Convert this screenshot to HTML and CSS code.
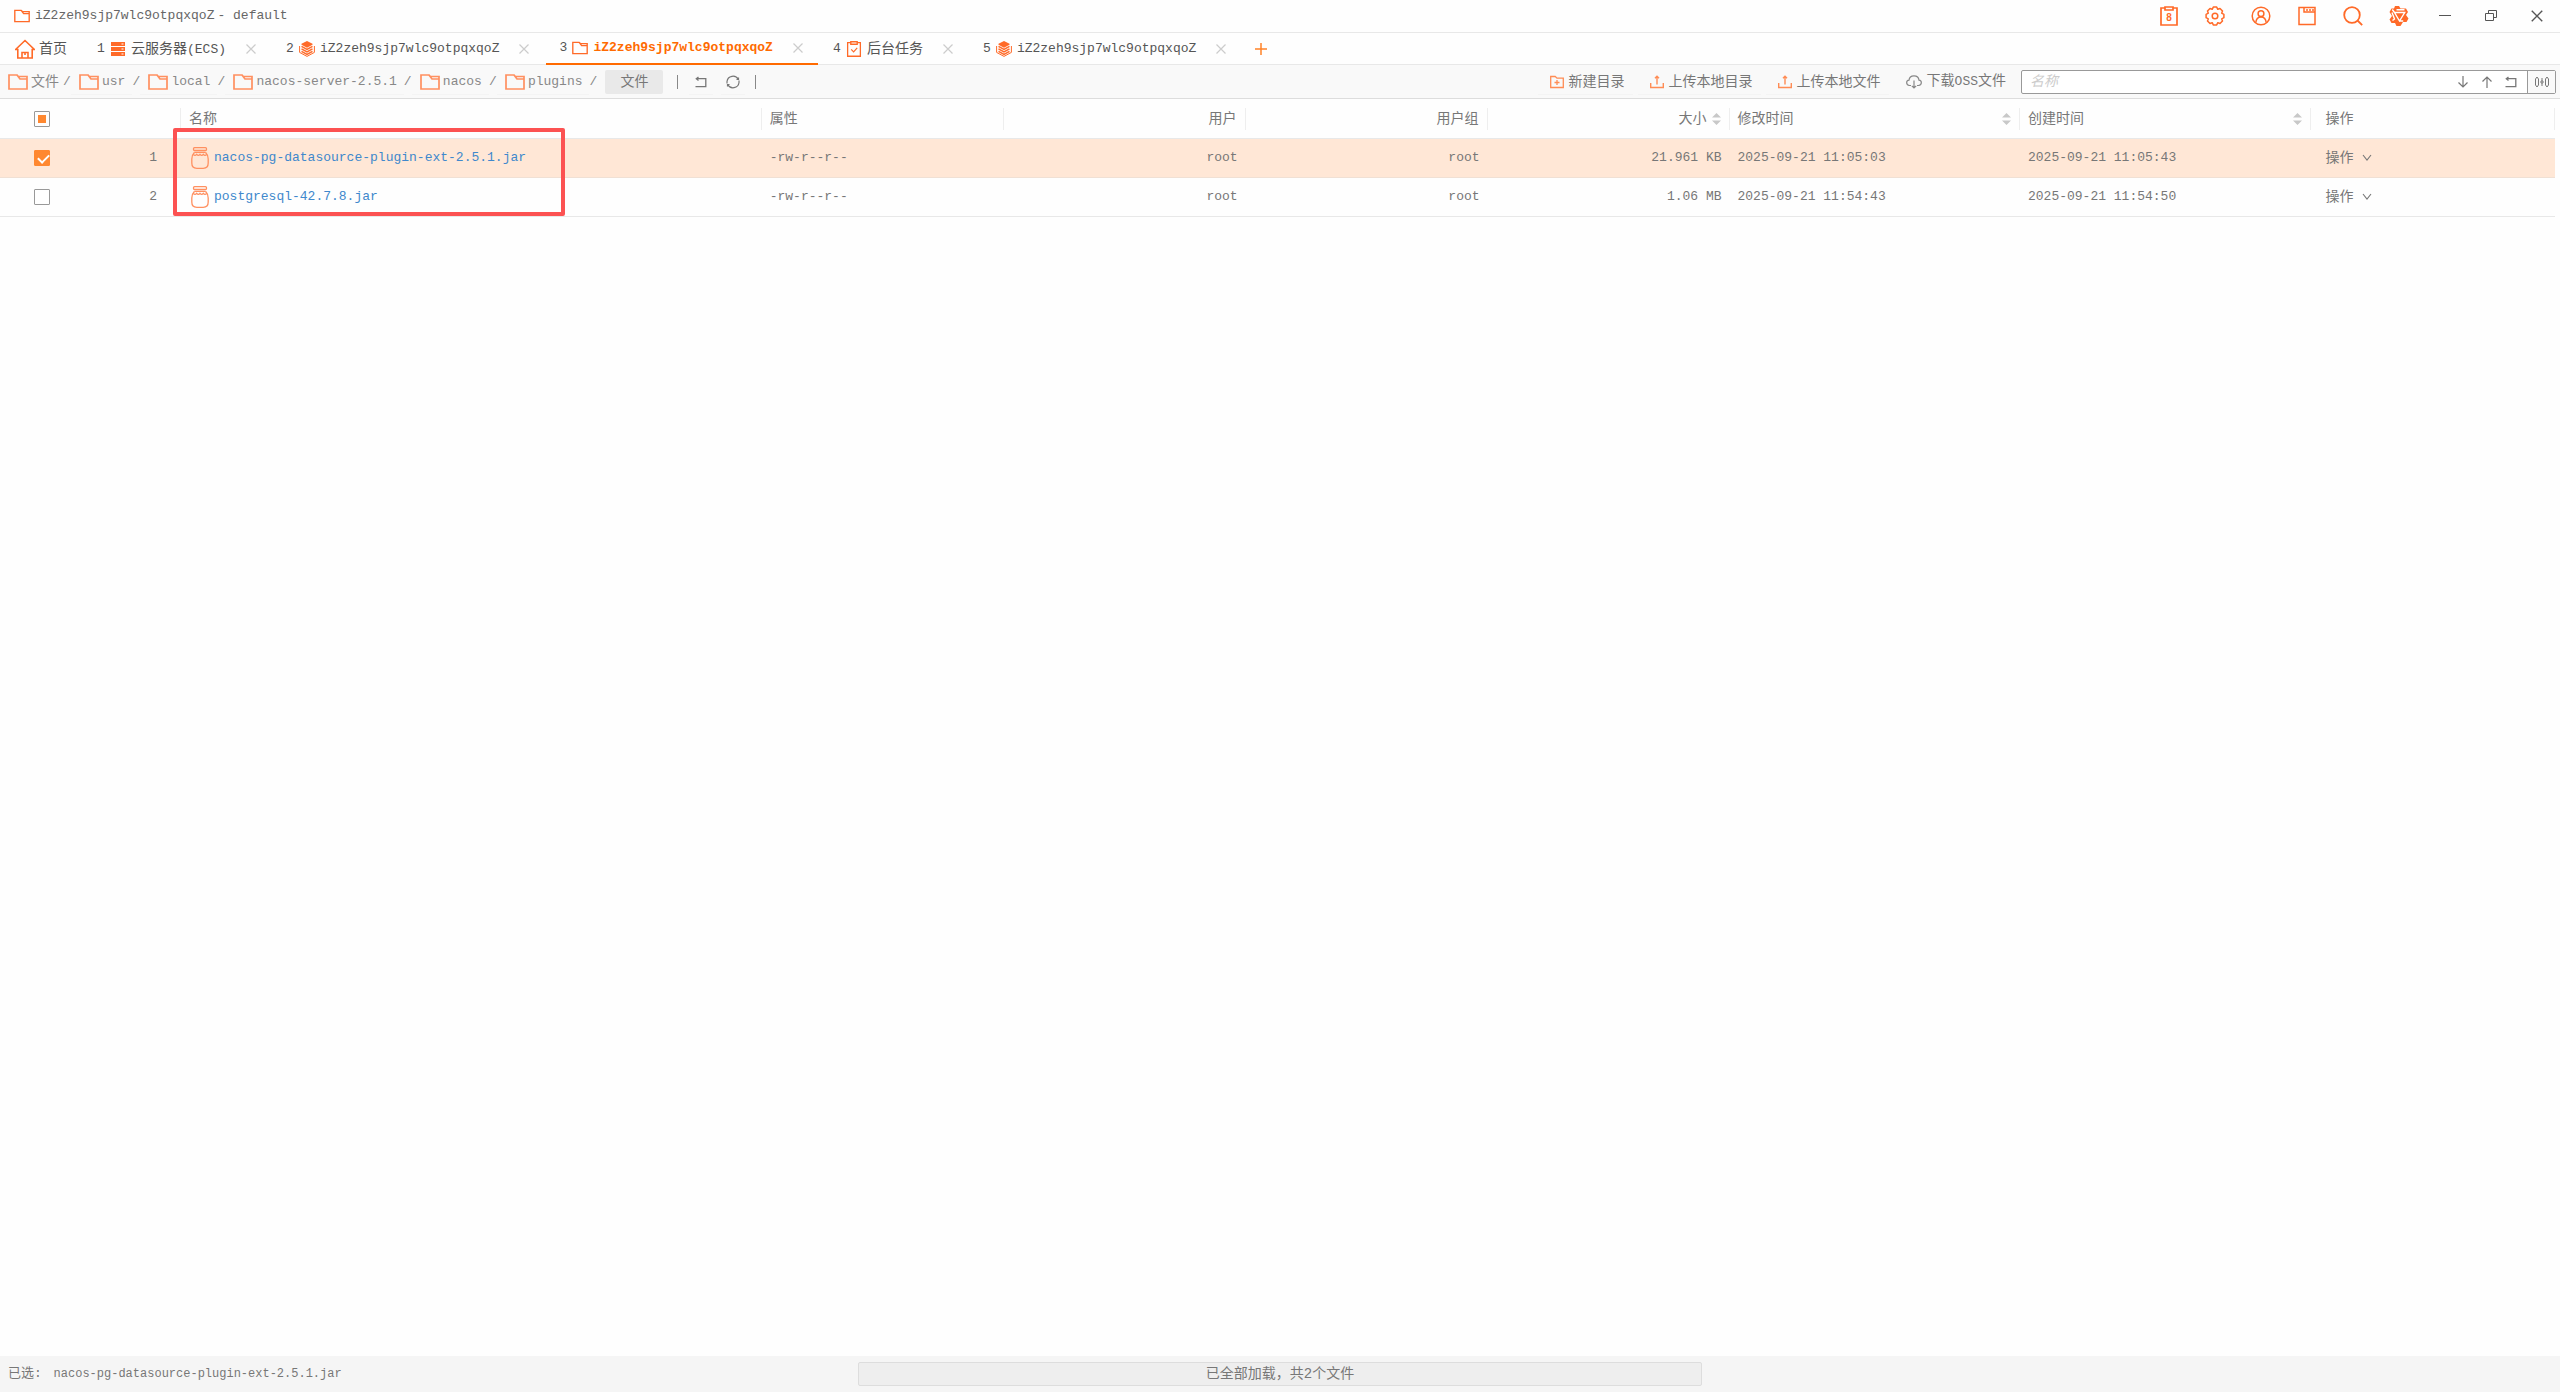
FILE: index.html
```
<!DOCTYPE html>
<html lang="zh-CN">
<head>
<meta charset="UTF-8">
<meta name="viewport" content="width=device-width, initial-scale=1.0">
<title>iZ2zeh9sjp7wlc9otpqxqoZ - default</title>
<link rel="stylesheet" href="styles.css">
</head>
<body>
<svg class="defs" width="0" height="0" aria-hidden="true">
    <symbol id="folder" viewBox="0 0 20 16">
        <path d="M1 1h8l1.500 1.500H19V15H1zM9 1l3 4h7" fill="none" stroke="currentColor" stroke-width="1.700"/>
    </symbol>
    <symbol id="stack" viewBox="0 0 16 16">
        <path d="M8 0l5.500 2.800v1L8 6.800 2.500 3.800v-1z" fill="currentColor"/>
        <path d="M2.500 5.300L8 8.300l5.500-3M2.500 7.800l5.500 3 5.500-3M2.500 10.300l5.500 3 5.500-3" fill="none" stroke="currentColor" stroke-width="1.500"/>
        <path d="M.6 5v6.400L8 15.400l7.400-4V5" fill="none" stroke="currentColor"/>
    </symbol>
    <symbol id="board" viewBox="0 0 18 20">
        <path d="M5 2H1v17h16V2h-4M5 1h8v3H5z" fill="none" stroke="currentColor" stroke-width="1.700"/>
    </symbol>
    <symbol id="jar" viewBox="0 0 18 22">
        <g fill="none" stroke="currentColor" stroke-width="1.300">
            <rect x="2.500" y=".7" width="13" height="2.800" rx="1"/>
            <path d="M3.500 5.300h11M2.300 7.300q1.700 2 3.400 0 1.700 2 3.300 0 1.700 2 3.300 0 1.700 2 3.400 0"/>
            <path d="M3.500 5.300C1.500 7.500.8 10 .8 12v4c0 3.500 2 5.300 5 5.300h6.400c3 0 5-1.800 5-5.300v-4c0-2-.7-4.500-2.700-6.700"/>
        </g>
    </symbol>
    <symbol id="back" viewBox="0 0 12 12">
        <path d="M3.500 1L1.300 2.700l2.200 1.800M1.300 2.700h9.500v8H.500" fill="none" stroke="currentColor" stroke-width="1.300"/>
    </symbol>
    <symbol id="close" viewBox="0 0 12 12">
        <path d="M1.500 1.500l9 9m0-9l-9 9" fill="none" stroke="currentColor" stroke-width="1.200"/>
    </symbol>
    <symbol id="upload" viewBox="0 0 14 14">
        <path d="M.7 8v4.500h12.600V8M7 9.500V1.500M5 3.300L7 1.300l2 2" fill="none" stroke="currentColor" stroke-width="1.400"/>
    </symbol>
    <symbol id="sort" viewBox="0 0 9 14">
        <path d="M4.500 1L9 5.500H0zM4.500 13L9 8.500H0z" fill="currentColor"/>
    </symbol>
    <symbol id="chevron" viewBox="0 0 10 8">
        <path d="M1 1l4 5 4-5" fill="none" stroke="currentColor" stroke-width="1.100"/>
    </symbol>
</svg>

<header class="titlebar">
    <svg class="title-icon"><use href="#folder"/></svg>
    <h1><span>iZ2zeh9sjp7wlc9otpqxqoZ</span> <span>- default</span></h1>
    <div class="window-tools">
        <button class="tool" aria-label="任务">
            <svg width="18" height="20" viewBox="0 0 18 20"><use href="#board"/><text x="9" y="15" class="badge-num">8</text></svg>
        </button>
        <button class="tool" aria-label="设置">
            <svg width="20" height="20" viewBox="0 0 20 20" fill="none" stroke="currentColor" stroke-width="1.500"><path d="M18.900 8.300v3.400l-2.200 1.100.8 2.200-2.500 2.500-2.200-.8-1.100 2.200H8.300l-1.100-2.200-2.200.8L2.500 15l.8-2.200-2.200-1.100V8.300l2.200-1.100L2.500 5 5 2.500l2.200.8 1.100-2.200h3.400l1.100 2.200 2.200-.8L17.500 5l-.8 2.200z" stroke-linejoin="round"/><circle cx="10" cy="10" r="2.800"/></svg>
        </button>
        <button class="tool" aria-label="用户">
            <svg width="20" height="20" viewBox="0 0 20 20" fill="none" stroke="currentColor" stroke-width="1.500"><circle cx="10" cy="10" r="8.800"/><circle cx="10" cy="7.700" r="2.900"/><path d="M4.800 16.500c.4-3.500 2.200-5.500 5.200-5.500s4.800 2 5.200 5.500"/></svg>
        </button>
        <button class="tool" aria-label="窗口">
            <svg width="18" height="20" viewBox="0 0 18 20" fill="none" stroke="currentColor" stroke-width="1.500"><path d="M1 1.500h16v17H1zM6 1.500V6h11M9 3v2M12 3v2M15 3v2"/></svg>
        </button>
        <button class="tool" aria-label="搜索">
            <svg width="20" height="20" viewBox="0 0 20 20" fill="none" stroke="currentColor" stroke-width="1.800"><circle cx="9" cy="9" r="7.800"/><path d="M14.500 14.500l4.700 4.700"/></svg>
        </button>
        <button class="tool" aria-label="助手">
            <svg width="20" height="20" viewBox="0 0 20 20"><path d="M6 0h4l1.500 2.500H17l2 3.500-2 3 2.500 3.500-2 3.500H14l-2.500 4h-4L6 17H2.500L.5 13.500 3 10 .5 6l2-3.500H5z" fill="currentColor"/><path d="M5.500 6.500h10.200L10.500 15zM5.500 6.500L3.300 3.500M3 6.500l2.500 6.500-2 1.500M10.500 15h3.700M7.500 3.800h8" fill="none" stroke="#fff" stroke-width="1.400"/></svg>
        </button>
        <button class="tool dark" aria-label="最小化">
            <svg width="12" height="12" viewBox="0 0 12 12"><path d="M0 5.500h12" stroke="currentColor"/></svg>
        </button>
        <button class="tool dark" aria-label="还原">
            <svg width="12" height="12" viewBox="0 0 12 12" fill="none" stroke="currentColor"><path d="M.5 3.500h8v7h-8zM3.500 3.500v-3h8v7h-3"/></svg>
        </button>
        <button class="tool dark" aria-label="关闭">
            <svg class="close-window"><use href="#close"/></svg>
        </button>
    </div>
</header>

<nav class="tabs">
    <a href="#" class="home">
        <svg width="20" height="20" viewBox="0 0 20 20" fill="none" stroke="currentColor" stroke-width="1.600"><path d="M.6 10.500L10 1.500l9.400 9h-2.200V19H2.800v-8.500zM7 19v-5.500h6V19M10 13.500V16"/></svg>
        首页
    </a>
    <div class="tab">
        <span class="num">1</span>
        <svg class="tab-icon" viewBox="0 0 16 16"><path d="M1 1h14v4H1zM1 6h14v4H1zM1 11h14v4H1z" fill="currentColor"/><path d="M11.500 3h2M11.500 8h2M11.500 13h2" stroke="#fff"/></svg>
        <a href="#">云服务器<span class="mono">(ECS)</span></a>
        <button class="tab-close" aria-label="关闭标签"><svg><use href="#close"/></svg></button>
    </div>
    <div class="tab">
        <span class="num">2</span>
        <svg class="tab-icon"><use href="#stack"/></svg>
        <a href="#" class="mono">iZ2zeh9sjp7wlc9otpqxqoZ</a>
        <button class="tab-close" aria-label="关闭标签"><svg><use href="#close"/></svg></button>
    </div>
    <div class="tab active">
        <span class="num">3</span>
        <svg class="tab-icon"><use href="#folder"/></svg>
        <a href="#" class="mono">iZ2zeh9sjp7wlc9otpqxqoZ</a>
        <button class="tab-close" aria-label="关闭标签"><svg><use href="#close"/></svg></button>
    </div>
    <div class="tab">
        <span class="num">4</span>
        <svg class="tab-icon" viewBox="0 0 18 20"><use href="#board"/><path d="M5.500 10.500l3 3 4.500-5" fill="none" stroke="currentColor" stroke-width="1.500"/></svg>
        <a href="#">后台任务</a>
        <button class="tab-close" aria-label="关闭标签"><svg><use href="#close"/></svg></button>
    </div>
    <div class="tab">
        <span class="num">5</span>
        <svg class="tab-icon"><use href="#stack"/></svg>
        <a href="#" class="mono">iZ2zeh9sjp7wlc9otpqxqoZ</a>
        <button class="tab-close" aria-label="关闭标签"><svg><use href="#close"/></svg></button>
    </div>
    <button class="tab-add" aria-label="新建标签"><svg width="12" height="12" viewBox="0 0 12 12"><path d="M0 6h12M6 0v12" stroke="currentColor" stroke-width="1.500"/></svg></button>
</nav>

<div class="toolbar">
    <div class="path">
        <a href="#" class="root"><svg><use href="#folder"/></svg>文件</a><i>/</i>
        <a href="#"><svg><use href="#folder"/></svg><span class="mono">usr</span></a><i>/</i>
        <a href="#"><svg><use href="#folder"/></svg><span class="mono">local</span></a><i>/</i>
        <a href="#"><svg><use href="#folder"/></svg><span class="mono">nacos-server-2.5.1</span></a><i>/</i>
        <a href="#"><svg><use href="#folder"/></svg><span class="mono">nacos</span></a><i>/</i>
        <a href="#"><svg><use href="#folder"/></svg><span class="mono">plugins</span></a><i>/</i>
    </div>
    <button class="type">文件</button>
    <span class="bar"></span>
    <button class="small" aria-label="返回"><svg width="12" height="12"><use href="#back"/></svg></button>
    <button class="small" aria-label="刷新"><svg width="14" height="14" viewBox="0 0 14 14" fill="none" stroke="currentColor" stroke-width="1.200"><path d="M1 8.500V6.500A6 6 0 0 1 12.300 4.500M13 5.500v2A6 6 0 0 1 1.700 9.500M12.500 2.500v2h-2M1.500 11.500v-2h2"/></svg></button>
    <span class="bar"></span>
    <div class="actions">
        <button><svg width="14" height="14" viewBox="0 0 14 14" fill="none" stroke="currentColor" stroke-width="1.300"><path d="M.7 1.500h4.500L7 3.200h6.300v9.300H.7zM4.500 7.500h5M7 5v5"/></svg>新建目录</button>
        <button><svg width="14" height="14"><use href="#upload"/></svg>上传本地目录</button>
        <button><svg width="14" height="14"><use href="#upload"/></svg>上传本地文件</button>
        <button class="download"><svg width="16" height="14" viewBox="0 0 16 14" fill="none" stroke="currentColor" stroke-width="1.200"><path d="M5 10.500H3.500C-.3 10-.1 5.500 3 5.200 3.500-.6 12.500-.6 13 5.200c3.100.3 3.300 4.800-.5 5.300H11M8 5.500V13M5.800 10.800L8 13l2.200-2.200"/></svg><span>下载<span class="mono">OSS</span>文件</span></button>
    </div>
    <div class="search">
        <input type="text" placeholder="名称" aria-label="名称">
        <button aria-label="下一个"><svg width="12" height="12" viewBox="0 0 12 12"><path d="M6 0v11M1.500 6.500L6 11l4.500-4.500" fill="none" stroke="currentColor" stroke-width="1.200"/></svg></button>
        <button aria-label="上一个"><svg width="12" height="12" viewBox="0 0 12 12"><path d="M6 12V1M1.500 5.500L6 1l4.500 4.500" fill="none" stroke="currentColor" stroke-width="1.200"/></svg></button>
        <button aria-label="返回"><svg width="12" height="12"><use href="#back"/></svg></button>
        <button class="filter" aria-label="筛选"><svg width="14" height="12" viewBox="0 0 14 12" fill="none" stroke="currentColor"><path d="M.5 3L2 1l1.500 2v6L2 11 .5 9zM10.500 3L12 1l1.500 2v6L12 11l-1.500-2zM7 2v8M5.500 6L7 4.500 8.500 6 7 7.500z"/></svg></button>
    </div>
</div>

<main>
    <table>
        <colgroup>
            <col class="c-check"><col class="c-index"><col>
            <col class="c-fixed"><col class="c-fixed"><col class="c-fixed"><col class="c-fixed">
            <col class="c-time"><col class="c-time"><col class="c-op">
        </colgroup>
        <thead>
            <tr>
                <th class="check"><input type="checkbox" class="some" aria-label="全选"></th>
                <th><div></div></th>
                <th><div>名称</div></th>
                <th><div>属性</div></th>
                <th class="right"><div>用户</div></th>
                <th class="right"><div>用户组</div></th>
                <th class="right"><div>大小<svg class="sort"><use href="#sort"/></svg></div></th>
                <th class="spread"><div>修改时间<svg class="sort"><use href="#sort"/></svg></div></th>
                <th class="spread"><div>创建时间<svg class="sort"><use href="#sort"/></svg></div></th>
                <th class="op"><div>操作</div></th>
            </tr>
        </thead>
        <tbody>
            <tr class="selected">
                <td class="check"><input type="checkbox" checked aria-label="选择 nacos-pg-datasource-plugin-ext-2.5.1.jar"></td>
                <td class="index">1</td>
                <td class="name"><a href="#"><svg><use href="#jar"/></svg>nacos-pg-datasource-plugin-ext-2.5.1.jar</a></td>
                <td>-rw-r--r--</td>
                <td class="right">root</td>
                <td class="right">root</td>
                <td class="right">21.961 KB</td>
                <td>2025-09-21 11:05:03</td>
                <td>2025-09-21 11:05:43</td>
                <td class="op"><button>操作<svg><use href="#chevron"/></svg></button></td>
            </tr>
            <tr>
                <td class="check"><input type="checkbox" aria-label="选择 postgresql-42.7.8.jar"></td>
                <td class="index">2</td>
                <td class="name"><a href="#"><svg><use href="#jar"/></svg>postgresql-42.7.8.jar</a></td>
                <td>-rw-r--r--</td>
                <td class="right">root</td>
                <td class="right">root</td>
                <td class="right">1.06 MB</td>
                <td>2025-09-21 11:54:43</td>
                <td>2025-09-21 11:54:50</td>
                <td class="op"><button>操作<svg><use href="#chevron"/></svg></button></td>
            </tr>
        </tbody>
    </table>
    <div class="mark"></div>
</main>

<footer>
    <p>已选: <span>nacos-pg-datasource-plugin-ext-2.5.1.jar</span></p>
    <button class="loaded">已全部加载，共2个文件</button>
</footer>
</body>
</html>
```

FILE: styles.css
```
* {
    box-sizing: border-box;
}
body {
    margin: 0;
    min-height: 100vh;
    display: flex;
    flex-direction: column;
    background: #fefefe;
    color: #777;
    font: 14px/20px "Liberation Mono", "Noto Sans CJK SC", monospace;
}
button, input {
    margin: 0;
    padding: 0;
    border: 0;
    background: none;
    color: inherit;
    font: inherit;
}
a {
    color: inherit;
    text-decoration: none;
}
svg {
    flex: none;
}
.defs {
    position: absolute;
}
.mono {
    font-size: 13px;
}

/* 标题栏 */
.titlebar {
    display: flex;
    align-items: center;
    height: 33px;
    padding-left: 14px;
    border-bottom: 1px solid #e8e8e8;
}
.title-icon {
    width: 16px;
    height: 14px;
    color: #ff6a28;
}
h1 {
    display: flex;
    gap: 3px;
    margin: 0 0 0 5px;
    color: #666;
    font-size: 13px;
    font-weight: normal;
}
.window-tools {
    display: flex;
    margin-left: auto;
}
.tool {
    display: flex;
    justify-content: center;
    align-items: center;
    width: 46px;
    height: 32px;
    color: #ff6a28;
}
.tool.dark {
    color: #555;
}
.close-window {
    width: 14px;
    height: 14px;
}
.badge-num {
    fill: currentColor;
    font: bold 10px "Liberation Sans", sans-serif;
    text-anchor: middle;
}

/* 标签页 */
.tabs {
    display: flex;
    height: 32px;
    border-bottom: 1px solid #e8e8e8;
    color: #555;
}
.home {
    display: flex;
    align-items: center;
    gap: 4px;
    width: 84px;
    padding-left: 15px;
}
.home svg, .tab-icon {
    color: #ff6a28;
}
.tab {
    display: flex;
    align-items: center;
    height: 32px;
    margin-right: 2px;
    padding: 0 14px 0 13px;
}
.num {
    width: 8px;
    font-size: 13px;
}
.tab-icon {
    width: 16px;
    height: 16px;
    margin: 0 5px;
}
.tab-close {
    display: flex;
    margin-left: 19px;
    color: #ccc;
}
.tab-close svg {
    width: 12px;
    height: 12px;
}
.tab.active {
    border-bottom: 2px solid #ff6a00;
}
.tab.active a {
    color: #ff6a00;
    font-weight: bold;
}
.tab-add {
    margin-left: 12px;
    color: #ff8228;
}
.tab-add svg {
    display: block;
}

/* 工具栏 */
.toolbar {
    display: flex;
    align-items: center;
    height: 34px;
    padding-right: 4px;
    border-bottom: 1px solid #ddd;
    background: #f9f9f9;
}
.path {
    display: flex;
    align-items: center;
    color: #888;
}
.path a {
    display: flex;
    align-items: center;
    gap: 3px;
    height: 24px;
    padding: 0 7px 0 8px;
    box-shadow: 0 1px #f4f4f4;
}
.path .root {
    padding-right: 4px;
    box-shadow: none;
}
.path svg {
    width: 20px;
    height: 16px;
    color: #ff9060;
}
.path i {
    width: 8px;
    font-style: normal;
    font-size: 13px;
}
.type {
    width: 58px;
    height: 24px;
    margin-left: 8px;
    border-radius: 2px;
    background: #e9e9e9;
}
.bar {
    width: 1px;
    height: 14px;
    margin: 0 11px 0 14px;
    background: #888;
}
.small {
    display: flex;
    justify-content: center;
    align-items: center;
    width: 24px;
    height: 24px;
    margin-right: 8px;
    box-shadow: 0 1px #f4f4f4;
}
.small + .bar {
    margin-left: 2px;
}
.actions {
    display: flex;
    gap: 5px;
    margin-left: auto;
}
.actions button {
    display: flex;
    align-items: center;
    gap: 5px;
    height: 24px;
    padding: 0 8px 0 12px;
    box-shadow: 0 1px #f4f4f4;
}
.actions svg {
    color: #ff8c54;
}
.actions .download {
    padding-right: 15px;
    box-shadow: none;
}
.download svg {
    color: #888;
}
.search {
    display: flex;
    width: 535px;
    height: 24px;
    border: 1px solid #999;
    border-radius: 2px;
    background: #fff;
}
.search input {
    flex: 1;
    min-width: 0;
    padding: 0 8px;
}
.search input::placeholder {
    color: #ccc;
    font-style: italic;
}
.search button {
    display: flex;
    justify-content: center;
    align-items: center;
    width: 24px;
}
.search .filter {
    width: 28px;
    margin-left: 4px;
    border-left: 1px solid #999;
    background: #f9f9f9;
}

/* 文件列表 */
main {
    position: relative;
    flex: 1;
    padding-right: 5px;
}
table {
    width: 100%;
    table-layout: fixed;
    border-collapse: separate;
    border-spacing: 0;
}
.c-check {
    width: 85px;
}
.c-index {
    width: 96px;
}
.c-fixed {
    width: 9.47%;
}
.c-time {
    width: 11.37%;
}
.c-op {
    width: 9.57%;
}
th, td {
    height: 39px;
    padding: 0 8px;
    border-bottom: 1px solid #e8e8e8;
    text-align: left;
}
th {
    height: 40px;
    padding: 0;
    font-weight: normal;
}
th div {
    height: 22px;
    padding: 0 8px;
    border-right: 1px solid #eee;
    line-height: 22px;
}
td {
    font-size: 13px;
}
.right, .index {
    text-align: right;
}
.index {
    padding-right: 24px;
}
.right div, .spread div {
    display: flex;
    justify-content: flex-end;
    align-items: center;
    gap: 5px;
}
.spread div {
    justify-content: space-between;
}
.sort {
    width: 9px;
    height: 14px;
    color: #c8c8c8;
}
.op, .op div {
    padding-left: 15px;
}
th.op {
    padding-left: 0;
}
.op button {
    display: flex;
    align-items: center;
    gap: 8px;
    font-size: 14px;
}
.op svg {
    width: 10px;
    height: 8px;
}
.check {
    padding: 0 0 0 34px;
}
.check input {
    display: block;
    width: 16px;
    height: 16px;
    border: 1px solid #999;
    border-radius: 1px;
    background: #fff;
    appearance: none;
}
.check input:checked {
    border-color: #ff8830;
    background: #ff8830;
}
.check input:checked::after {
    content: "";
    display: block;
    width: 9px;
    height: 5px;
    margin: 3px 0 0 3px;
    border: solid #fff;
    border-width: 0 0 2px 2px;
    transform: rotate(-45deg);
}
.check .some {
    padding: 3px;
    background: #ff8830 content-box;
}
.selected td {
    background: #ffe7d6;
    border-color: #f0e0d4;
}
.name a {
    display: flex;
    align-items: center;
    gap: 5px;
    margin-left: 2px;
    color: #4088cc;
}
.name svg {
    width: 18px;
    height: 22px;
    color: #ff9060;
}
.mark {
    position: absolute;
    top: 29px;
    left: 173px;
    width: 392px;
    height: 88px;
    border: 4px solid #fc5252;
    border-radius: 2px;
    pointer-events: none;
}

/* 状态栏 */
footer {
    display: grid;
    grid-template-columns: 1fr 33% 1fr;
    align-items: center;
    height: 36px;
    background: #f5f5f5;
}
footer p {
    margin: 0;
    padding-left: 8px;
    font-size: 13px;
}
footer p span {
    margin-left: 4px;
    font-size: 12px;
}
.loaded {
    height: 24px;
    border: 1px solid #ddd;
    border-radius: 2px;
    background: #eee;
}
```
